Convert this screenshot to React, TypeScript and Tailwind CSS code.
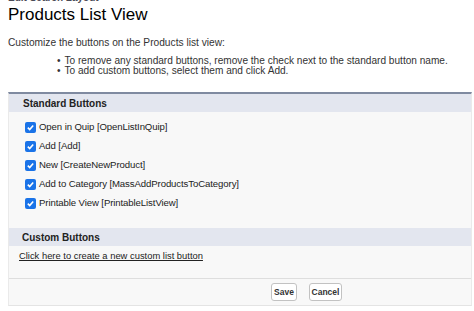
import React from 'react';

const standardButtons = [
  'Open in Quip [OpenListInQuip]',
  'Add [Add]',
  'New [CreateNewProduct]',
  'Add to Category [MassAddProductsToCategory]',
  'Printable View [PrintableListView]',
];

export default function App() {
  return (
    <div
      className="w-[474px] h-[311px] overflow-hidden bg-white pl-[8px] pr-[2px] text-[#333]"
      style={{ fontFamily: '"Liberation Sans", Arial, sans-serif' }}
    >
      {/* breadcrumb, cut off at the top */}
      <div className="mt-[-7px] text-[10px] leading-[10px] font-bold text-[#4a4a56]">Edit Search Layout</div>
      <h1 className="mt-[1px] text-[17px] leading-[22px] font-normal text-[#000]">Products List View</h1>

      <p className="mt-[11px] text-[10.2px] leading-[12px]">Customize the buttons on the Products list view:</p>
      <ul className="mt-[7px] pl-[49px] text-[10.1px] leading-[10px]">
        <li className="flex gap-[4px]">
          <span>•</span>
          <span>To remove any standard buttons, remove the check next to the standard button name.</span>
        </li>
        <li className="flex gap-[4px]">
          <span>•</span>
          <span>To add custom buttons, select them and click Add.</span>
        </li>
      </ul>

      {/* panel */}
      <div className="mt-[16px] border-t-[2px] border-t-[#7f8aa0] border-x border-b border-x-[#eaeaea] border-b-[#e4e4e4] bg-[#f8f8f8]">
        <div className="h-[18px] flex items-center pl-[14px] bg-[#e3e6ef] text-[10px] font-bold text-[#222]">
          Standard Buttons
        </div>
        <div className="pt-[6px] pb-[15px] pl-[16px]">
          {standardButtons.map((label) => (
            <label key={label} className="h-[19px] flex items-center gap-[3px] text-[9.6px] tracking-[-0.1px] text-[#222]">
              <span className="w-[11px] h-[11px] rounded-[2px] bg-[#1a73e8] flex items-center justify-center">
                <svg width="9" height="9" viewBox="0 0 10 10">
                  <path d="M2 5.2 L4.1 7.2 L8 2.8" fill="none" stroke="white" strokeWidth="1.8" />
                </svg>
              </span>
              {label}
            </label>
          ))}
        </div>
        <div className="h-[18px] flex items-center pl-[13px] bg-[#e3e6ef] text-[10px] font-bold text-[#222]">
          Custom Buttons
        </div>
        <div className="pt-[4px] pb-[16px] pl-[10px] text-[9.4px] leading-[12px]">
          <a className="underline text-[#222] cursor-pointer">Click here to create a new custom list button</a>
        </div>
        <div className="border-t border-t-[#dedede] h-[27px] flex items-center gap-[12px] pl-[262px] bg-[#f8f8f8]">
          <button className="h-[18px] w-[26px] rounded-[3px] border border-[#c2c2c2] bg-white text-[8.5px] font-bold text-[#333]">
            Save
          </button>
          <button className="h-[18px] w-[33px] rounded-[3px] border border-[#c2c2c2] bg-white text-[8.5px] font-bold text-[#333]">
            Cancel
          </button>
        </div>
      </div>
    </div>
  );
}
